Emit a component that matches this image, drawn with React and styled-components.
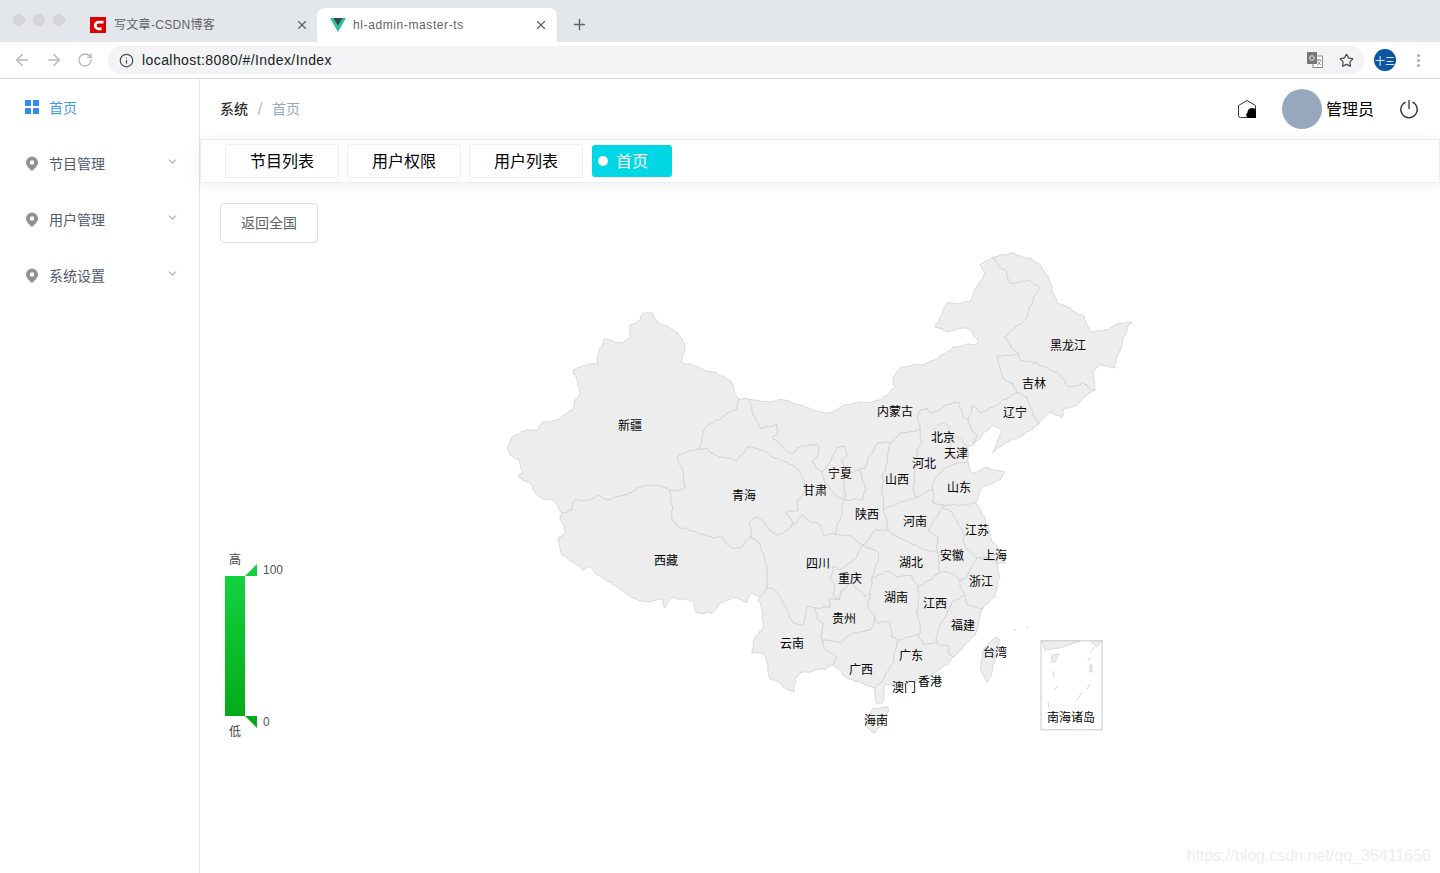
import styled, { createGlobalStyle } from 'styled-components'
import { ArrowLeft, ArrowRight, RotateCw, Info, Star, X, Plus, ChevronDown } from 'lucide-react'

const GlobalStyle = createGlobalStyle`
  html, body, #root {
    margin: 0;
    height: 100%;
  }
  body {
    overflow: hidden;
    background: #fff;
    font-family: 'Liberation Sans', 'Noto Sans CJK SC', sans-serif;
  }
`

const Page = styled.div`
  position: relative;
  height: 873px;
  display: flex;
  flex-direction: column;
`

/* browser chrome */
const TabStrip = styled.div`
  height: 42px;
  flex: none;
  background: #e3e6ea;
  display: flex;
  align-items: flex-end;
`

const TrafficLights = styled.div`
  width: 78px;
  height: 42px;
  padding: 14px 0 0 13px;
  box-sizing: border-box;
  display: flex;
  gap: 8px;
`

const Light = styled.span`
  width: 12px;
  height: 12px;
  border-radius: 50%;
  background: #d4d6d8;
  border: 1px solid #cfd1d3;
  box-sizing: border-box;
`

const Tab = styled.div`
  width: ${(p) => (p.$active ? '240px' : '239px')};
  height: 34px;
  box-sizing: border-box;
  padding: 0 ${(p) => (p.$active ? '9px' : '8px')} 0 ${(p) => (p.$active ? '13px' : '12px')};
  display: flex;
  align-items: center;
  border-radius: 8px 8px 0 0;
  background: ${(p) => (p.$active ? '#fff' : 'transparent')};
  color: #5f6368;
  font-size: 12px;
`

const TabTitle = styled.span`
  flex: 1;
  margin-left: ${(p) => p.$gap || '8px'};
  line-height: 16px;
  letter-spacing: ${(p) => p.$spacing || '0.3px'};
  white-space: nowrap;
`

const NewTab = styled.div`
  margin: 0 0 9px 14px;
  color: #5f6368;
  display: flex;
`

const Toolbar = styled.div`
  height: 37px;
  flex: none;
  display: flex;
  align-items: center;
  padding-left: 13px;
  box-sizing: border-box;
  border-bottom: 1px solid #d8d9db;
  gap: 14px;
  color: #b6b9bc;
`

const Omnibox = styled.div`
  margin-left: 1px;
  width: 1256px;
  height: 28px;
  border-radius: 14px;
  background: #f1f3f4;
  box-sizing: border-box;
  padding: 0 10px 0 10.5px;
  display: flex;
  align-items: center;
  color: #4a4d50;
`

const Url = styled.span`
  flex: 1;
  margin-left: 8.5px;
  font-size: 14px;
  color: #202124;
  letter-spacing: 0.42px;
`

const StarIcon = styled(Star)`
  margin-left: 16px;
`

const AccountBadge = styled.span`
  width: 22px;
  height: 22px;
  border-radius: 50%;
  background: #0a56a3;
  color: #fff;
  font-size: 10px;
  display: flex;
  align-items: center;
  justify-content: center;
  margin-left: -4px;
  flex: none;
  white-space: nowrap;
`

const MenuDots = styled.span`
  display: flex;
  flex-direction: column;
  gap: 2px;
  margin-left: 6.5px;
`

const Dot = styled.i`
  width: 3px;
  height: 3px;
  border-radius: 50%;
  background: #a9acaf;
`

/* app layout */
const Layout = styled.div`
  flex: 1;
  display: flex;
  min-height: 0;
`

const Sidebar = styled.aside`
  width: 200px;
  flex: none;
  box-sizing: border-box;
  border-right: 1px solid #e3e5ea;
`

const MenuItem = styled.div`
  height: 56px;
  box-sizing: border-box;
  padding: 0 20px 0 25px;
  display: flex;
  align-items: center;
  font-size: 14px;
  color: ${(p) => (p.$active ? '#3d9bf8' : '#515a6e')};
`

const MenuLabel = styled.span`
  flex: 1;
  margin-left: 10px;
`

const Caret = styled(ChevronDown)`
  color: #a9adb5;
  margin: 0 0 4px;
`

const Main = styled.main`
  flex: 1;
  min-width: 0;
`

const Header = styled.header`
  height: 60px;
  display: flex;
  align-items: center;
  padding: 0 21px 0 20px;
  font-size: 14px;
`

const Crumb = styled.span`
  margin-bottom: 2px;
  color: ${(p) => (p.$current ? '#97a8be' : '#303133')};
  font-weight: ${(p) => (p.$current ? 400 : 500)};
`

const CrumbSep = styled.span`
  color: #c0c4cc;
  font-size: 18px;
  margin: 0 9.5px;
`

const HeaderRight = styled.div`
  margin-left: auto;
  display: flex;
  align-items: center;
`

const Avatar = styled.span`
  width: 40px;
  height: 40px;
  border-radius: 50%;
  background: #97a8be;
  margin-left: 25px;
`

const UserName = styled.span`
  margin: 0 25px 2px 4px;
  font-size: 16px;
  color: #000;
`

const TagBar = styled.nav`
  height: 44px;
  box-sizing: border-box;
  border: 1px solid #eceef6;
  border-left-color: #f0f1f7;
  box-shadow: 0 2px 12px rgba(60, 70, 110, 0.09);
  padding-left: 24px;
  display: flex;
  align-items: center;
  gap: 8px;
  background: #fff;
`

const Tag = styled.div`
  width: ${(p) => (p.$active ? '80px' : '114px')};
  height: ${(p) => (p.$active ? '32px' : '34px')};
  box-sizing: border-box;
  border: ${(p) => (p.$active ? 'none' : '1px solid #eceef6')};
  border-radius: 3px;
  margin-left: ${(p) => (p.$active ? '1px' : '0')};
  background: ${(p) => (p.$active ? '#00d7e4' : '#fff')};
  color: ${(p) => (p.$active ? '#fff' : '#000')};
  font-size: 16px;
  display: flex;
  align-items: center;
  padding: 0 0 2px ${(p) => (p.$active ? '6px' : '24px')};
`

const TagDot = styled.i`
  width: 10px;
  height: 10px;
  border-radius: 50%;
  background: #fff;
  margin: 2px 8px 0 0;
`

const Content = styled.div`
  padding: 20px 20px 0;
`

const BackButton = styled.button`
  display: block;
  width: 98px;
  height: 40px;
  box-sizing: border-box;
  padding: 0 0 2px;
  background: #fff;
  border: 1px solid #dcdee8;
  border-radius: 4px;
  color: #606266;
  font: 14px 'Liberation Sans', 'Noto Sans CJK SC', sans-serif;
`

const ChartRow = styled.div`
  margin-top: 2px;
  padding-left: 5px;
  display: flex;
  align-items: flex-start;
`

/* visual map legend */
const Legend = styled.div`
  width: 60px;
  flex: none;
  margin-top: 307px;
  display: grid;
  grid-template-columns: 20px 12px auto;
  grid-template-rows: 24px 140px 24px;
  font-size: 12px;
  color: #333;
`

const LegendEnd = styled.span`
  grid-column: 1;
  grid-row: ${(p) => (p.$low ? 3 : 1)};
  line-height: 16px;
  text-align: center;
  align-self: ${(p) => (p.$low ? 'end' : 'start')};
  color: #444;
`

const LegendBar = styled.div`
  grid-column: 1;
  grid-row: 2;
  background: linear-gradient(to bottom, #14d23f, #05aa18);
`

const LegendMark = styled.span`
  grid-column: 2;
  grid-row: ${(p) => (p.$low ? 3 : 1)};
  width: 12px;
  height: 12px;
  align-self: ${(p) => (p.$low ? 'start' : 'end')};
  background: ${(p) => (p.$low ? '#05aa18' : '#14d23f')};
  clip-path: ${(p) =>
    p.$low ? 'polygon(0 0, 100% 0, 100% 100%)' : 'polygon(0 100%, 100% 100%, 100% 0)'};
`

const LegendValue = styled.span`
  grid-column: 3;
  grid-row: ${(p) => (p.$low ? 3 : 1)};
  line-height: 12px;
  margin-left: 6px;
  align-self: ${(p) => (p.$low ? 'start' : 'end')};
  color: #555;
`

const MapSvg = styled.svg`
  margin-left: 215px;
  flex: none;
  display: block;
`

const Province = styled.polygon`
  fill: #ededed;
  stroke: #cbcbcb;
  stroke-width: 0.7;
  stroke-linejoin: round;
`

const MapLabel = styled.text`
  font-size: 12px;
  fill: #000;
  text-anchor: middle;
  dominant-baseline: central;
  font-family: 'Noto Sans CJK SC', sans-serif;
`

const InsetFrame = styled.rect`
  fill: #fff;
  stroke: #d9d9d9;
  stroke-width: 1.4;
`

const Watermark = styled.div`
  position: absolute;
  right: 9px;
  bottom: 8px;
  font-size: 16px;
  color: #eeeeee;
  pointer-events: none;
`

const PROVINCES = {
  xinjiang: '643,313 653,313 657,322 670,328 678,333 685,347 682,363 700,368 717,373 730,380 739,399 737,410 727,413 717,420 705,429 698,449 677,457 682,467 683,480 685,487 682,490 670,490 657,485 637,488 627,495 610,500 598,495 590,500 575,500 572,510 562,513 553,500 540,497 533,490 532,485 518,475 523,473 520,460 510,455 507,447 512,437 527,430 538,430 542,423 550,422 573,410 575,400 580,393 577,380 573,370 590,364 598,365 597,357 604,339 622,343 630,338 630,325 640,320',
  xizang: '562,513 572,510 575,500 590,500 598,495 610,500 627,495 637,488 657,485 670,490 670,492 673,507 672,518 680,528 697,532 713,538 722,537 732,548 740,548 750,537 760,543 763,553 767,570 767,588 760,597 752,593 747,602 733,597 720,603 712,613 697,613 690,600 672,597 665,608 663,600 650,602 633,598 617,587 610,582 590,567 583,570 562,555 558,538 565,533 560,517',
  qinghai: '677,457 698,449 707,448 720,457 737,460 747,447 763,450 777,458 797,468 803,480 806,490 798,500 798,510 785,513 793,523 788,530 777,535 767,527 757,516 750,522 752,537 750,537 740,548 732,548 722,537 713,538 697,532 680,528 672,518 673,507 670,492 670,490 682,490 685,487 683,480 682,467',
  gansu: '739,399 748,399 755,417 760,428 777,424 778,432 772,438 785,450 793,453 797,448 817,444 819,452 812,462 822,472 825,483 830,488 838,497 845,500 845,473 858,470 862,478 865,487 863,500 845,500 843,503 842,513 838,523 835,535 833,533 823,535 820,525 810,522 803,515 788,530 793,523 785,513 798,510 798,500 806,490 803,480 797,468 777,458 763,450 747,447 737,460 720,457 707,448 698,449 705,429 717,420 727,413 737,410',
  ningxia: '837,447 845,447 847,455 842,460 845,473 845,500 838,497 830,488 825,483 822,472 830,462',
  neimenggu: '748,399 770,402 785,400 800,405 822,412 827,413 853,403 880,400 895,387 893,377 900,368 923,365 942,355 953,347 978,343 967,328 948,332 935,327 947,303 970,302 973,295 985,273 980,265 993,257 997,263 1007,272 1010,283 1030,280 1040,288 1033,302 1028,313 1023,322 1005,337 1012,348 1018,353 997,357 1000,368 1003,378 1013,383 1017,393 1000,403 980,413 973,405 972,413 968,420 962,417 960,403 953,403 930,413 927,408 920,410 918,417 920,430 900,433 890,443 878,443 868,457 865,468 858,470 845,473 842,460 847,455 845,447 837,447 830,462 822,472 812,462 819,452 817,444 797,448 793,453 785,450 772,438 778,432 777,424 760,428 755,417',
  heilongjiang: '993,257 1013,253 1030,258 1042,267 1050,282 1057,303 1083,315 1090,332 1107,330 1115,325 1132,322 1127,330 1122,343 1115,368 1100,365 1093,372 1095,390 1083,383 1068,387 1057,372 1037,363 1020,360 1018,353 1012,348 1005,337 1023,322 1028,313 1033,302 1040,288 1030,280 1010,283 1007,272 997,263',
  jilin: '997,357 1018,353 1020,360 1037,363 1057,372 1068,387 1083,383 1095,390 1087,395 1080,402 1063,410 1062,418 1048,413 1038,425 1027,397 1017,393 1013,383 1003,378 1000,368',
  liaoning: '973,405 980,413 1000,403 1017,393 1027,397 1038,425 1020,437 1005,442 992,453 997,440 1002,430 993,425 983,433 973,445 977,437 968,423 972,413',
  hebei: '918,417 920,410 927,408 930,413 953,403 960,403 962,417 968,420 968,423 977,437 973,445 967,448 968,453 968,462 957,463 943,470 933,482 933,490 917,497 913,488 915,467 917,450 922,443 920,430',
  beijing: '943,423 950,428 951,437 940,443 932,440 934,430',
  tianjin: '951,437 958,437 967,448 968,453 958,458 950,452',
  shandong: '933,482 943,470 957,463 968,462 972,473 977,472 987,467 1005,472 1000,480 983,487 975,503 957,505 942,505 932,502 933,490',
  henan: '883,510 900,502 917,497 933,490 932,502 942,505 943,508 937,517 928,530 938,537 938,553 920,548 903,540 888,530',
  shanxi: '890,443 900,433 920,430 922,443 917,450 915,467 913,488 917,497 900,502 883,510 882,488 883,473 887,457',
  shaanxi: '865,468 868,457 878,443 890,443 887,457 883,473 882,488 883,510 888,530 875,530 863,545 848,535 835,535 838,523 842,513 843,503 845,500 863,500 865,487 862,478 858,470',
  sichuan: '752,537 750,522 757,516 767,527 777,535 788,530 803,515 810,522 820,525 823,535 833,533 835,535 848,535 863,545 857,557 852,562 840,570 833,567 830,580 835,587 833,595 840,600 830,598 830,607 815,608 807,607 803,625 793,623 782,600 773,588 767,588 767,570 763,553 760,543 750,537',
  chongqing: '863,545 878,552 879,560 872,577 870,593 865,597 853,583 842,590 840,600 833,595 835,587 830,580 833,567 840,570 852,562 857,557',
  guizhou: '815,608 830,607 830,598 840,600 842,590 853,583 865,597 870,593 868,607 875,617 870,630 853,633 840,643 822,640 822,633 823,623 817,618',
  yunnan: '760,597 767,588 773,588 782,600 793,623 803,625 807,607 815,608 817,618 823,623 822,633 822,640 823,645 827,650 837,657 833,665 825,670 817,670 800,673 795,678 794,692 788,690 778,682 770,679 768,667 763,653 752,653 753,642 763,628 763,613 758,600',
  guangxi: '822,640 840,643 853,633 870,630 875,617 878,623 890,622 892,637 898,640 893,663 883,680 875,688 873,688 853,680 843,675 833,665 837,657 827,650 823,645',
  hunan: '872,577 885,571 900,577 912,575 918,587 920,597 917,613 920,633 918,635 898,640 892,637 890,622 878,623 875,617 868,607 870,593',
  hubei: '863,545 875,530 888,530 903,540 920,548 938,553 940,573 933,578 918,587 912,575 900,577 885,571 872,577 879,560 878,552',
  anhui: '943,508 952,512 963,533 965,547 977,558 967,577 960,580 948,572 940,573 938,553 938,537 928,530 937,517',
  jiangsu: '942,505 957,505 975,503 985,517 990,537 1000,552 987,558 977,558 965,547 963,533 952,512 943,508',
  shanghai: '987,558 1000,552 1005,563 997,563 987,560',
  zhejiang: '977,558 987,558 987,560 997,563 1000,577 995,597 983,608 968,605 965,595 960,587 960,580 967,577',
  fujian: '965,595 968,605 983,608 975,635 953,657 948,653 948,645 937,643 938,630 947,613 952,602',
  jiangxi: '918,587 933,578 940,573 948,572 960,580 960,587 965,595 952,602 947,613 938,630 937,643 923,645 918,635 920,633 917,613 920,597',
  guangdong: '898,640 918,635 923,645 937,643 948,645 948,653 953,657 948,665 930,677 917,680 900,685 885,685 884,695 882,703 877,704 875,693 875,688 883,680 893,663',
  taiwan: '997,637 1000,640 995,660 988,682 980,667 983,650',
  hainan: '865,717 873,708 888,707 887,717 875,733 865,725',
}

const LABELS = [
  ['黑龙江', 1068, 344], ['吉林', 1034, 382], ['辽宁', 1015, 411], ['内蒙古', 895, 410],
  ['北京', 943, 436], ['天津', 956, 452], ['河北', 924, 462], ['宁夏', 840, 472],
  ['山西', 897, 478], ['山东', 959, 486], ['甘肃', 815, 489], ['新疆', 630, 424],
  ['青海', 744, 494], ['陕西', 867, 513], ['河南', 915, 520], ['江苏', 977, 529],
  ['安徽', 952, 554], ['上海', 995, 554], ['西藏', 666, 559], ['四川', 818, 562],
  ['湖北', 911, 561], ['重庆', 850, 577], ['浙江', 981, 580], ['湖南', 896, 596],
  ['江西', 935, 602], ['贵州', 844, 617], ['福建', 963, 624], ['云南', 792, 642],
  ['台湾', 995, 651], ['广东', 911, 654], ['广西', 861, 668], ['香港', 930, 680],
  ['澳门', 904, 686], ['海南', 876, 719], ['南海诸岛', 1071, 716],
]

// dashes of the south sea inset
const INSET_ISLANDS = [
  '1052,655 1059,654 1055,662 1051,662',
  '1090,665 1092,665 1092,672 1090,672',
]
const INSET_DASHES = [
  [1053, 671, 1054, 677], [1054, 690, 1058, 686], [1048, 702, 1049, 708],
  [1077, 700, 1082, 692], [1087, 689, 1090, 684], [1091, 652, 1094, 647], [1088, 661, 1090, 657],
]

// make the hand-placed borders a bit jagged; the offset only depends on the
// two end points so provinces that share an edge stay in sync
function jag(a, b, depth) {
  const [p, q] = a[0] < b[0] || (a[0] === b[0] && a[1] < b[1]) ? [a, b] : [b, a]
  const len = Math.hypot(q[0] - p[0], q[1] - p[1])
  if (depth === 0 || len < 3) return []
  const seed = Math.sin(p[0] * 12.9898 + p[1] * 78.233 + q[0] * 37.719 + q[1] * 11.131) * 43758.5453
  const off = (seed - Math.floor(seed) - 0.5) * Math.min(len * 0.3, 2.4)
  const mid = [
    (a[0] + b[0]) / 2 - ((q[1] - p[1]) / len) * off,
    (a[1] + b[1]) / 2 + ((q[0] - p[0]) / len) * off,
  ]
  return [...jag(a, mid, depth - 1), mid, ...jag(mid, b, depth - 1)]
}

function jagged(points) {
  const pts = points.split(' ').map((s) => s.split(',').map(Number))
  return pts
    .flatMap((pt, i) => [pt, ...jag(pt, pts[(i + 1) % pts.length], 3)])
    .map(([x, y]) => x.toFixed(1) + ',' + y.toFixed(1))
    .join(' ')
}

function ChinaMap() {
  return (
    <MapSvg width="640" height="495" viewBox="500 245 640 495">
      <InsetFrame x="1041" y="640.7" width="61" height="89" />
      <Province points="1042,641 1045,650 1060,648 1080,641" />
      <Province points="1091,641 1097,647 1102,641" />
      {INSET_ISLANDS.map((pts) => (
        <Province key={pts} points={pts} />
      ))}
      {INSET_DASHES.map(([x1, y1, x2, y2]) => (
        <line key={x1 + '-' + y1} x1={x1} y1={y1} x2={x2} y2={y2} stroke="#d6d6d6" strokeWidth="1" />
      ))}
      {Object.entries(PROVINCES).map(([name, pts]) => (
        <Province key={name} points={jagged(pts)} />
      ))}
      <circle cx="1015" cy="630" r="1" fill="#e2e2e2" />
      <circle cx="1027" cy="627" r="1" fill="#e2e2e2" />
      {LABELS.map(([text, x, y]) => (
        <MapLabel key={text} x={x} y={y}>
          {text}
        </MapLabel>
      ))}
    </MapSvg>
  )
}

function CsdnIcon() {
  return (
    <svg width="16" height="16" viewBox="0 0 16 16">
      <rect width="16" height="16" fill="#dd0000" />
      <path d="M13.500 5.200 H8.500 a3.300 3.300 0 0 0 0 6.600 H11.500" fill="none" stroke="#fff" strokeWidth="2.800" />
    </svg>
  )
}

function VueIcon() {
  return (
    <svg width="16" height="14" viewBox="0 0 16 14">
      <polygon points="0,0 16,0 8,14" fill="#2fc09a" />
      <polygon points="3.400,0 12.600,0 8,7.600" fill="#33475b" />
    </svg>
  )
}

function TranslateIcon() {
  return (
    <svg width="16" height="16" viewBox="0 0 16 16">
      <rect x="6" y="4" width="9.500" height="11.500" fill="#fff" stroke="#8a8d90" />
      <path d="M9 8h5M11.500 7v1.500M10 13c2-1 3-2.500 3.500-4.500M10.500 9.500c.8 1.500 2 2.800 3.500 3.500" stroke="#777" fill="none" strokeWidth=".8" />
      <rect width="10" height="12" fill="#757779" />
      <circle cx="5" cy="6" r="2.300" fill="none" stroke="#e8e8e8" strokeWidth="1" />
    </svg>
  )
}

function GridIcon() {
  return (
    <svg width="14" height="14" viewBox="0 0 14 14" fill="#2d8cf0">
      <rect width="6" height="6" rx=".6" />
      <rect x="8" width="6" height="6" rx=".6" />
      <rect y="8" width="6" height="6" rx=".6" />
      <rect x="8" y="8" width="6" height="6" rx=".6" />
    </svg>
  )
}

function PinIcon() {
  return (
    <svg width="14" height="15" viewBox="0 0 14 15">
      <path
        fillRule="evenodd"
        fill="#8f9196"
        d="M7 .500a6 6 0 0 1 6 6c0 3-3.200 6-6 8.500-2.800-2.500-6-5.500-6-8.500a6 6 0 0 1 6-6zM7 4.200a2.300 2.300 0 1 0 0 4.600 2.300 2.300 0 0 0 0-4.600z"
      />
    </svg>
  )
}

function HomeIcon() {
  return (
    <svg width="20" height="20" viewBox="0 0 20 20">
      <path d="M10 1.500L18.500 6.500V18.500H3.500A2 2 0 0 1 1.500 16.500V6.500Z" fill="none" stroke="#333" strokeWidth="1" strokeLinejoin="round" />
      <path d="M19 19H12a3 3 0 0 1-1.500-5.500a4.500 4.500 0 0 1 8.500-2Z" fill="#000" />
    </svg>
  )
}

function PowerIcon() {
  return (
    <svg width="20" height="20" viewBox="0 0 20 20" fill="none" stroke="#333" strokeWidth="1.300">
      <path d="M6.500 3.200A8.200 8.200 0 1 0 13.500 3.200" />
      <path d="M10 1V10" />
    </svg>
  )
}

const MENU = ['节目管理', '用户管理', '系统设置']
const TAGS = ['节目列表', '用户权限', '用户列表']

export default function App() {
  return (
    <Page>
      <GlobalStyle />
      <TabStrip>
        <TrafficLights>
          <Light />
          <Light />
          <Light />
        </TrafficLights>
        <Tab>
          <CsdnIcon />
          <TabTitle>写文章-CSDN博客</TabTitle>
          <X size={14} />
        </Tab>
        <Tab $active>
          <VueIcon />
          <TabTitle $gap="7px" $spacing="0.6px">hl-admin-master-ts</TabTitle>
          <X size={14} />
        </Tab>
        <NewTab>
          <Plus size={17} strokeWidth={2} />
        </NewTab>
      </TabStrip>
      <Toolbar>
        <ArrowLeft size={18} />
        <ArrowRight size={18} />
        <RotateCw size={16} />
        <Omnibox>
          <Info size={15} />
          <Url>localhost:8080/#/Index/Index</Url>
          <TranslateIcon />
          <StarIcon size={15} />
        </Omnibox>
        <AccountBadge>十三</AccountBadge>
        <MenuDots>
          <Dot />
          <Dot />
          <Dot />
        </MenuDots>
      </Toolbar>
      <Layout>
        <Sidebar>
          <MenuItem $active>
            <GridIcon />
            <MenuLabel>首页</MenuLabel>
          </MenuItem>
          {MENU.map((label) => (
            <MenuItem key={label}>
              <PinIcon />
              <MenuLabel>{label}</MenuLabel>
              <Caret size={13} />
            </MenuItem>
          ))}
        </Sidebar>
        <Main>
          <Header>
            <Crumb>系统</Crumb>
            <CrumbSep>/</CrumbSep>
            <Crumb $current>首页</Crumb>
            <HeaderRight>
              <HomeIcon />
              <Avatar />
              <UserName>管理员</UserName>
              <PowerIcon />
            </HeaderRight>
          </Header>
          <TagBar>
            {TAGS.map((tag) => (
              <Tag key={tag}>{tag}</Tag>
            ))}
            <Tag $active>
              <TagDot />
              首页
            </Tag>
          </TagBar>
          <Content>
            <BackButton>返回全国</BackButton>
            <ChartRow>
              <Legend>
                <LegendEnd>高</LegendEnd>
                <LegendMark />
                <LegendValue>100</LegendValue>
                <LegendBar />
                <LegendEnd $low>低</LegendEnd>
                <LegendMark $low />
                <LegendValue $low>0</LegendValue>
              </Legend>
              <ChinaMap />
            </ChartRow>
          </Content>
        </Main>
      </Layout>
      <Watermark>https://blog.csdn.net/qq_35411656</Watermark>
    </Page>
  )
}
